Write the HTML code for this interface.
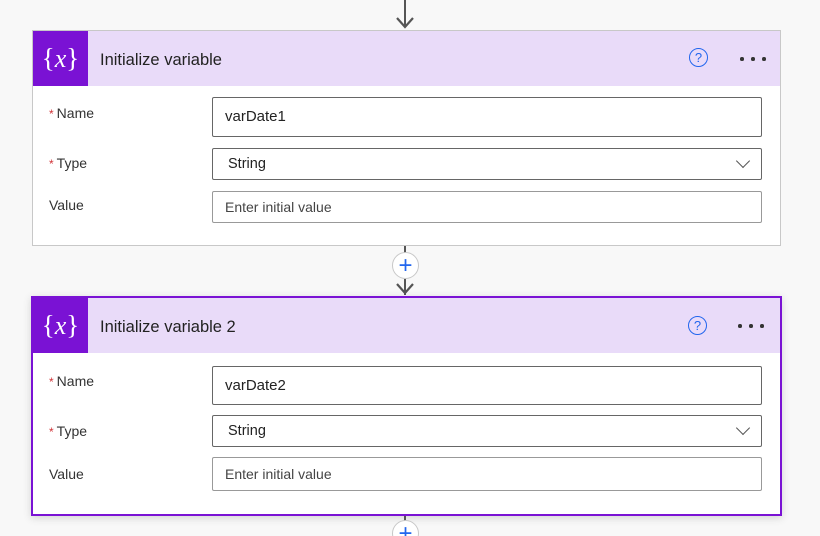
<!DOCTYPE html>
<html><head><style>
html,body{margin:0;width:820px;height:536px;overflow:hidden;}
body{background:#f8f8f8;position:relative;font-family:"Liberation Sans",sans-serif;}
.card{position:absolute;background:#fff;box-sizing:border-box;}
.hdr{position:absolute;left:0;right:0;top:0;height:55px;background:#e9dbf9;}
.ico{position:absolute;left:0;top:0;width:55px;height:55px;background:#7a12d4;color:#fff;font-family:"Liberation Serif",serif;font-size:27px;line-height:55px;text-align:center;}
.ico i{font-size:26px}
.ttl{position:absolute;left:67px;top:20px;font-size:16.5px;color:#222;}
.help{position:absolute;width:17px;height:17px;border:1.5px solid #2266ee;border-radius:50%;color:#2266ee;font-size:13px;line-height:17px;text-align:center;}
.dot{position:absolute;width:3.5px;height:3.5px;border-radius:50%;background:#333;}
.lbl{position:absolute;left:16px;font-size:14px;color:#333;}
.lbl b{color:#d13438;font-weight:normal;font-size:12px;margin-right:3px}
.inp{position:absolute;left:179px;width:550px;box-sizing:border-box;border:1px solid #666;border-radius:2px;font-size:15px;color:#222;padding-left:12px;}
.chev{position:absolute;right:13px;top:7px;width:9px;height:9px;border-right:1.2px solid #555;border-bottom:1.2px solid #555;transform:rotate(45deg);}
.line{position:absolute;left:404px;width:2px;background:#555;}
.plus{position:absolute;width:27px;height:27px;border:1.5px solid #c8c8c8;border-radius:50%;background:#fff;color:#2266ee;font-size:24px;line-height:26px;text-align:center;box-sizing:border-box;}
</style></head><body>
<div class="line" style="top:0;height:26px"></div>
<svg style="position:absolute;left:395px;top:14px" width="20" height="16"><path d="M2 4 L10 13 L18 4" fill="none" stroke="#555" stroke-width="2.2"/></svg>

<div class="card" style="left:32px;top:30px;width:749px;height:216px;border:1px solid #c8c8c8;">
 <div class="hdr"><div class="ico">{<i>x</i>}</div><div class="ttl">Initialize variable</div>
 <div class="help" style="left:656px;top:17px">?</div>
 <div class="dot" style="left:707px;top:26px"></div><div class="dot" style="left:718px;top:26px"></div><div class="dot" style="left:729px;top:26px"></div></div>
 <div class="lbl" style="top:74px"><b>*</b>Name</div>
 <div class="inp" style="top:66px;height:40px;line-height:38px;">varDate1</div>
 <div class="lbl" style="top:124px"><b>*</b>Type</div>
 <div class="inp" style="top:117px;height:32px;line-height:30px;font-size:14.5px;padding-left:15px">String<div class="chev"></div></div>
 <div class="lbl" style="top:166px">Value</div>
 <div class="inp" style="top:160px;height:32px;line-height:30px;font-size:14px;border-color:#999;color:#444">Enter initial value</div>
</div>

<div class="line" style="top:246px;height:8px"></div>
<div class="plus" style="left:392px;top:252px">+</div>
<div class="line" style="top:279px;height:16px"></div>
<svg style="position:absolute;left:395px;top:280px" width="20" height="16"><path d="M2 4 L10 13 L18 4" fill="none" stroke="#555" stroke-width="2.2"/></svg>

<div class="card" style="left:31px;top:296px;width:751px;height:220px;border:2px solid #7a12d4;box-shadow:0 2px 8px rgba(0,0,0,.15)">
 <div class="hdr"><div class="ico">{<i>x</i>}</div><div class="ttl">Initialize variable 2</div>
 <div class="help" style="left:655px;top:18px">?</div>
 <div class="dot" style="left:705px;top:26px"></div><div class="dot" style="left:716px;top:26px"></div><div class="dot" style="left:727px;top:26px"></div></div>
 <div class="lbl" style="top:75px"><b>*</b>Name</div>
 <div class="inp" style="top:68px;height:39px;line-height:37px;">varDate2</div>
 <div class="lbl" style="top:125px"><b>*</b>Type</div>
 <div class="inp" style="top:117px;height:32px;line-height:30px;font-size:14.5px;padding-left:15px">String<div class="chev"></div></div>
 <div class="lbl" style="top:168px">Value</div>
 <div class="inp" style="top:159px;height:34px;line-height:32px;font-size:14px;border-color:#999;color:#444">Enter initial value</div>
</div>
<div class="line" style="top:516px;height:6px"></div>
<div class="plus" style="left:392px;top:520px">+</div>
</body></html>
